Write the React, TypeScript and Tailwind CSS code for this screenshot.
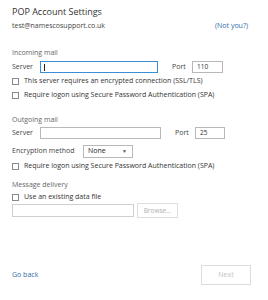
import React from "react";

function Check({ label }: { label: string }) {
  return (
    <div className="flex items-center h-[12px]">
      <div className="w-[7px] h-[7px] border border-[#8a8a8a] bg-white shrink-0" />
      <span className="ml-[5px] text-[7px] text-[#333] whitespace-nowrap">{label}</span>
    </div>
  );
}

export default function App() {
  return (
    <div
      className="w-[268px] h-[300px] bg-white relative flex flex-col"
      style={{ fontFamily: '"Open Sans", "Noto Sans", sans-serif' }}
    >
      <div className="pl-[12px] pr-[20px] pt-[5px]">
        <div className="text-[9px] leading-[13px] text-[#333]">POP Account Settings</div>
        <div className="flex justify-between items-center mt-[2px] h-[12px]">
          <span className="text-[7px] text-[#444]">test@namescosupport.co.uk</span>
          <span className="text-[7px] text-[#2e6ea5]">(Not you?)</span>
        </div>

        <div className="mt-[16px] text-[7px] leading-[10px] text-[#666]">Incoming mail</div>
        <div className="flex items-center mt-[3px] h-[12px]">
          <span className="w-[28px] text-[7px] text-[#444]">Server</span>
          <div className="w-[118px] h-[12px] border border-[#3b8fd6] flex items-center pl-[3px]">
            <div className="w-px h-[7px] bg-[#222]" />
          </div>
          <span className="ml-[14px] w-[20px] text-[7px] text-[#444]">Port</span>
          <div className="w-[31px] h-[12px] border border-[#b8b8b8] flex items-center pl-[4px] text-[6.5px] text-[#333]">110</div>
        </div>
        <div className="mt-[2px]">
          <Check label="This server requires an encrypted connection (SSL/TLS)" />
        </div>
        <div className="mt-[2px]">
          <Check label="Require logon using Secure Password Authentication (SPA)" />
        </div>

        <div className="mt-[14px] text-[7px] leading-[10px] text-[#666]">Outgoing mail</div>
        <div className="flex items-center mt-[2px] h-[12px]">
          <span className="w-[28px] text-[7px] text-[#444]">Server</span>
          <div className="w-[121px] h-[12px] border border-[#b8b8b8]" />
          <span className="ml-[14px] w-[20px] text-[7px] text-[#444]">Port</span>
          <div className="w-[30px] h-[12px] border border-[#b8b8b8] flex items-center pl-[4px] text-[6.5px] text-[#333]">25</div>
        </div>
        <div className="flex items-center mt-[6px] h-[13px]">
          <span className="w-[71px] text-[7px] text-[#444]">Encryption method</span>
          <div className="w-[50px] h-[13px] border border-[#b8b8b8] flex items-center justify-between pl-[4px] pr-[5px]">
            <span className="text-[7px] text-[#222]">None</span>
            <span className="text-[5px] text-[#555]">▼</span>
          </div>
        </div>
        <div className="mt-[2px]">
          <Check label="Require logon using Secure Password Authentication (SPA)" />
        </div>

        <div className="mt-[8px] text-[7px] leading-[10px] text-[#666]">Message delivery</div>
        <div className="mt-[1px]">
          <Check label="Use an existing data file" />
        </div>
        <div className="flex items-center">
          <div className="w-[122px] h-[13px] border border-[#cfcfcf]" />
          <div className="ml-[3px] w-[41px] h-[15px] border border-[#dedede] flex items-center justify-center text-[6.5px] text-[#b0b0b0]">Browse...</div>
        </div>
      </div>

      <div className="flex-1" />
      <div className="flex items-center justify-between pl-[12px] pr-[17px] pb-[15px]">
        <span className="text-[7px] text-[#2e6ea5]">Go back</span>
        <div className="w-[50px] h-[20px] border border-[#dcdcdc] flex items-center justify-center text-[7px] text-[#c4c4c4]">Next</div>
      </div>
    </div>
  );
}
